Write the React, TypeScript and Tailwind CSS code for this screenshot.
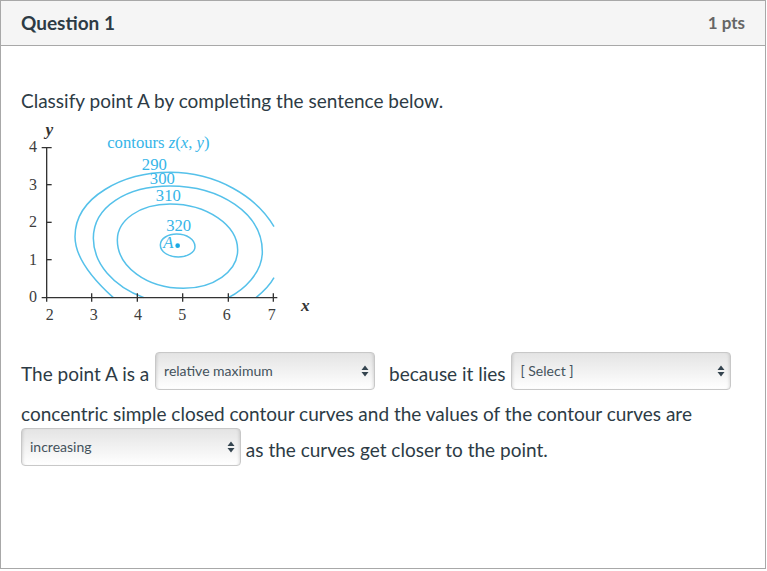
const blue = "#55c1ea";

function Select({ label, className = "" }: { label: string; className?: string }) {
  return (
    <span className={`${className} inline-flex align-middle w-[220px] h-[38px] mb-[10px] pl-[8px] pr-[5px] pt-[3px] pb-[3px] items-center justify-between rounded-[4px] border border-[#c8c8c8] bg-gradient-to-b from-[#e4e4e4] to-[#ffffff] shadow-[inset_3px_0_3px_-2px_rgba(0,0,0,0.12),inset_-3px_0_3px_-2px_rgba(0,0,0,0.12)] text-[14px] leading-[18px] text-[#44525c]`}>
      <span className="-mt-[1px]">{label}</span>
      <svg width="8" height="12" viewBox="0 0 8 12">
        <path d="M4 0.5 L7.5 5 L0.5 5 Z M4 11.5 L7.5 7 L0.5 7 Z" fill="#34444f" />
      </svg>
    </span>
  );
}

function Graph() {
  const serif = { fontFamily: '"Liberation Serif", serif' };
  const ticksX = [275, 412, 548, 685, 820];
  const ticksY = [113, 224, 337, 449];
  return (
    <svg width="300" height="209" viewBox="63 21 900 627" style={serif} className="block mt-[2px]">
      <g fill="none" stroke={blue} strokeWidth="4.5">
        <path d="M340 563 C270 500 225 440 225 380 C225 260 370 187 510 187 C650 187 770 260 822 350" />
        <path d="M768 563 C790 545 810 525 822 503" />
        <path d="M432 563 C340 530 280 460 280 385 C280 290 380 228 510 228 C660 228 787 310 787 425 C787 490 730 540 685 563" />
        <path d="M352 390 C352 330 420 282 510 282 C620 282 713 345 713 420 C713 485 640 535 550 535 C440 535 352 470 352 390 Z" />
        <path d="M481 405 C481 385 505 372 530 372 C560 372 585 388 585 410 C585 428 560 441 535 441 C505 441 481 425 481 405 Z" />
      </g>
      <circle cx="533" cy="407" r="7" fill="#1aa9e4" />
      <g stroke="#333" strokeWidth="4" fill="none">
        <path d="M140 113 V575 M125 563 H832 M125 113 H155" />
        {ticksY.slice(1).map((y) => (
          <path key={y} d={`M140 ${y} H155`} />
        ))}
        {ticksX.map((x) => (
          <path key={x} d={`M${x} 550 V575`} />
        ))}
      </g>
      <g fill="#3d3d3d" fontSize="48" textAnchor="middle">
        <text x="99" y="127">4</text>
        <text x="99" y="239">3</text>
        <text x="99" y="352">2</text>
        <text x="99" y="464">1</text>
        <text x="99" y="576">0</text>
        <text x="149" y="630">2</text>
        <text x="281" y="630">3</text>
        <text x="414" y="630">4</text>
        <text x="547" y="630">5</text>
        <text x="680" y="630">6</text>
        <text x="815" y="630">7</text>
      </g>
      <g fill="#333" fontSize="52" fontStyle="italic" fontWeight="bold" textAnchor="middle">
        <text x="148" y="76">y</text>
        <text x="916" y="604">x</text>
      </g>
      <g fill="#36b5e8" fontSize="50" textAnchor="middle">
        <text x="475" y="114">
          contours <tspan fontStyle="italic">z</tspan>(<tspan fontStyle="italic">x</tspan>, <tspan fontStyle="italic">y</tspan>)
        </text>
        <text x="463" y="181">290</text>
        <text x="487" y="221">300</text>
        <text x="505" y="272">310</text>
        <text x="536" y="364">320</text>
        <text x="505" y="414" fontStyle="italic">A</text>
      </g>
    </svg>
  );
}

export default function App() {
  return (
    <div className="w-[766px] h-[569px] border border-[#a8a8a8] bg-white font-['Lato',sans-serif] text-[#2d3b45]">
      <div className="h-[45px] flex items-center justify-between pl-[20px] pr-[20px] bg-[#f5f5f5] border-b border-[#a8a8a8]">
        <div className="text-[19px] font-bold">Question 1</div>
        <div className="text-[17px] font-bold text-[#666666]">1 pts</div>
      </div>
      <div className="px-[20px] pt-[41px]">
        <p className="text-[19px] leading-[28px]">Classify point A by completing the sentence below.</p>
        <Graph />
        <p className="mt-[26px] text-[19px] leading-[28px]">
          The point A is a <Select label="relative maximum" className="ml-[1px]" />
          <span className="ml-[14px]">because it lies</span> <Select label="[ Select ]" className="ml-[1px]" /> concentric simple closed contour curves and the values of the contour curves are <Select label="increasing" /> as the curves get closer to the point.
        </p>
      </div>
    </div>
  );
}
